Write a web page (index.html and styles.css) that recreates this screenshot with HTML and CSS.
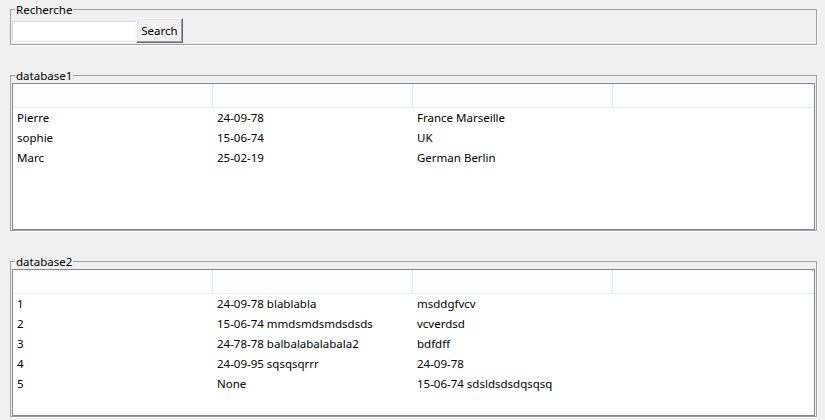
FILE: index.html
```html
<!DOCTYPE html>
<html>
<head>
<meta charset="utf-8">
<title>Recherche</title>
<link rel="stylesheet" href="styles.css">
</head>
<body>
<div class="window">
  <fieldset class="group">
    <legend class="group-label">Recherche</legend>
    <div class="search-row">
      <input class="entry" type="text">
      <button class="btn">Search</button>
    </div>
  </fieldset>

  <fieldset class="group group-db">
    <legend class="group-label">database1</legend>
    <div class="tree">
      <div class="tree-head">
        <div class="hcell"></div><div class="hcell"></div><div class="hcell"></div><div class="hcell last"></div>
      </div>
      <div class="tree-body">
        <div class="row"><span>Pierre</span><span>24-09-78</span><span>France Marseille</span><span></span></div>
        <div class="row"><span>sophie</span><span>15-06-74</span><span>UK</span><span></span></div>
        <div class="row"><span>Marc</span><span>25-02-19</span><span>German Berlin</span><span></span></div>
      </div>
    </div>
  </fieldset>

  <fieldset class="group group-db">
    <legend class="group-label">database2</legend>
    <div class="tree">
      <div class="tree-head">
        <div class="hcell"></div><div class="hcell"></div><div class="hcell"></div><div class="hcell last"></div>
      </div>
      <div class="tree-body">
        <div class="row"><span>1</span><span>24-09-78 blablabla</span><span>msddgfvcv</span><span></span></div>
        <div class="row"><span>2</span><span>15-06-74 mmdsmdsmdsdsds</span><span>vcverdsd</span><span></span></div>
        <div class="row"><span>3</span><span>24-78-78 balbalabalabala2</span><span>bdfdff</span><span></span></div>
        <div class="row"><span>4</span><span>24-09-95 sqsqsqrrr</span><span>24-09-78</span><span></span></div>
        <div class="row"><span>5</span><span>None</span><span>15-06-74 sdsldsdsdqsqsq</span><span></span></div>
      </div>
    </div>
  </fieldset>
</div>
</body>
</html>
```

FILE: styles.css
```css
html, body {
  margin: 0;
  padding: 0;
  background: #f0f0f0;
}

body {
  font-family: "Segoe UI", "Noto Sans", "Open Sans", sans-serif;
  font-size: 11.5px;
  color: #000;
}

.window {
  width: 825px;
  height: 420px;
  box-sizing: border-box;
  padding: 1px 8px 0 10px;
  display: flex;
  flex-direction: column;
  overflow: hidden;
}

.group {
  margin: 0;
  padding: 0;
  min-width: 0;
  border: 1px solid #a0a0a0;
  box-shadow: 1px 1px 0 #ffffff;
}

.group-db {
  margin-top: 22px;
}

.group-label {
  margin-left: 4px;
  padding: 0 1px;
  line-height: 17px;
  height: 16px;
}

.search-row {
  display: flex;
  align-items: center;
  padding: 1px 0 1px 1px;
}

.entry {
  box-sizing: border-box;
  width: 124px;
  height: 20px;
  margin: 0;
  padding: 0 2px;
  border: 1px solid #d7d7d7;
  border-right-color: #f7f7f7;
  border-bottom-color: #f7f7f7;
  background: #fff;
  font: inherit;
  outline: none;
}

.btn {
  box-sizing: border-box;
  width: 47px;
  height: 25px;
  margin: 0;
  padding: 0;
  font: inherit;
  color: #000;
  background: #f0f0f0;
  border: 1px solid;
  border-color: #ffffff #696969 #696969 #ffffff;
  box-shadow: inset -1px -1px 0 #a0a0a0, inset 1px 1px 0 #e3e3e3;
}

.tree {
  margin: 0 1px 0 1px;
  border: 1px solid #828790;
  background: #fff;
}

.tree-head {
  display: grid;
  grid-template-columns: 200px 200px 200px 1fr;
  height: 24px;
  box-sizing: border-box;
  background: #fcfcfc;
  border-bottom: 1px solid #e5edf8;
}

.hcell {
  border-right: 1px solid #e3ebf7;
}

.hcell.last {
  border-right: none;
}

.tree-body {
  height: 121px;
}

.row {
  display: grid;
  grid-template-columns: 200px 200px 200px 1fr;
  height: 20px;
  line-height: 20px;
}

.row span {
  padding-left: 4px;
  white-space: nowrap;
}
```
